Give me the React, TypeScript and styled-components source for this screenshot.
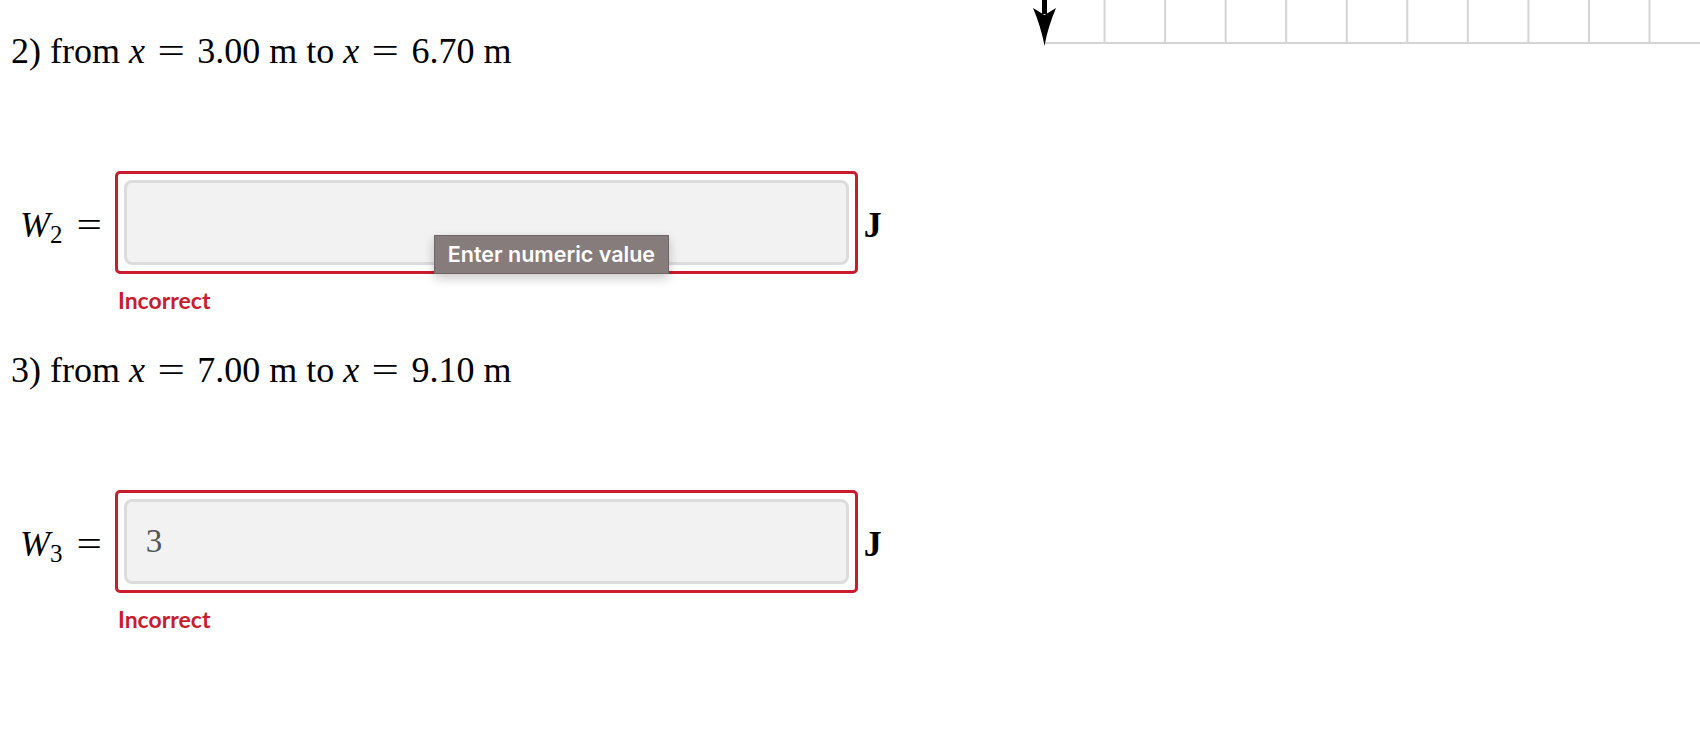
import React from 'react';
import styled, { createGlobalStyle } from 'styled-components';

const GlobalStyle = createGlobalStyle`
  html, body {
    margin: 0;
    padding: 0;
    background: #fff;
  }
  body {
    font-family: "Liberation Serif", "Times New Roman", serif;
    color: #000;
  }
`;

const Page = styled.div`
  display: flex;
  align-items: flex-start;
  width: 1700px;
  min-height: 736px;
`;

const Questions = styled.div`
  flex: 0 0 1030px;
  display: flex;
  flex-direction: column;
  padding-top: 29px;
`;

const Section = styled.section`
  display: flex;
  flex-direction: column;
  & + & {
    margin-top: 35px;
  }
`;

const Prompt = styled.div`
  font-size: 36px;
  line-height: 44px;
  padding-left: 11px;
  white-space: nowrap;
`;

const Var = styled.i`
  font-style: italic;
`;

const Eq = styled.span<{ $scale?: number; $gap?: number }>`
  display: inline-block;
  margin: 0 ${({ $gap }) => $gap ?? 16}px;
  transform: scaleX(${({ $scale }) => $scale ?? 1.35});
`;

const AnswerRow = styled.div`
  display: flex;
  align-items: center;
  margin-top: 98px;
`;

const Label = styled.div`
  flex: 0 0 114px;
  box-sizing: border-box;
  padding: 5px 0 0 20px;
  font-size: 36px;
  line-height: 44px;
  white-space: nowrap;
`;

const Sub = styled.sub`
  font-size: 25px;
  font-style: normal;
  vertical-align: -6px;
  line-height: 0;
`;

const Field = styled.div`
  position: relative;
  box-sizing: border-box;
  width: 743px;
  height: 103px;
  padding: 6px;
  border: 3px solid #c91c2e;
  border-radius: 5px;
`;

const Input = styled.input`
  display: block;
  box-sizing: border-box;
  width: 100%;
  height: 100%;
  margin: 0;
  padding: 0 19px;
  border: 3px solid #dcdcdc;
  border-radius: 8px;
  background: #f2f2f2;
  font-family: "Liberation Serif", "Times New Roman", serif;
  font-size: 33px;
  color: #555;
  outline: none;
`;

const Unit = styled.div`
  padding: 5px 0 0 6px;
  font-size: 36px;
  line-height: 44px;
  font-weight: 700;
`;

const Tooltip = styled.div`
  position: absolute;
  left: 316px;
  top: 61px;
  height: 39px;
  box-sizing: border-box;
  padding: 0 13px;
  background: #867c7c;
  border: 1px solid #6e6565;
  color: #fff;
  font-family: Inter, "Liberation Sans", Arial, sans-serif;
  font-weight: 600;
  font-size: 21.5px;
  line-height: 37px;
  white-space: nowrap;
  box-shadow: 0 4px 10px rgba(0, 0, 0, 0.22);
`;

const Feedback = styled.div`
  margin-top: 13px;
  padding-left: 118px;
  font-family: Lato, "Open Sans", sans-serif;
  font-weight: 700;
  font-size: 23px;
  line-height: 26px;
  color: #c91c2e;
`;

const Figure = styled.svg`
  display: block;
  flex: 0 0 670px;
`;

type Part = {
  number: number;
  from: string;
  to: string;
  index: number;
  value: string;
  hint?: string;
};

const parts: Part[] = [
  { number: 2, from: '3.00', to: '6.70', index: 2, value: '', hint: 'Enter numeric value' },
  { number: 3, from: '7.00', to: '9.10', index: 3, value: '3' },
];

const GridTop: React.FC = () => {
  const step = 60.55;
  const lines = Array.from({ length: 11 }, (_, i) => 14 + step * (i + 1));
  return (
    <Figure width="670" height="60" viewBox="0 0 670 60">
      {lines.map((x) => (
        <line key={x} x1={x} y1={0} x2={x} y2={43} stroke="#d4d4d4" strokeWidth="2" />
      ))}
      <line x1={15} y1={43} x2={670} y2={43} stroke="#d4d4d4" strokeWidth="2" />
      <rect x={12} y={0} width={5} height={14} fill="#000" />
      <path d="M3 8 L14.5 15 L26 8 C21 20 17 32 14.5 46 C12 32 8 20 3 8 Z" fill="#000" />
    </Figure>
  );
};

const Question: React.FC<{ part: Part }> = ({ part }) => (
  <Section>
    <Prompt>
      {part.number}) from <Var>x</Var>
      <Eq>=</Eq>
      {part.from} m to <Var>x</Var>
      <Eq>=</Eq>
      {part.to} m
    </Prompt>
    <AnswerRow>
      <Label>
        <Var>W</Var>
        <Sub>{part.index}</Sub>
        <Eq $gap={16} $scale={1.25}>=</Eq>
      </Label>
      <Field>
        <Input type="text" readOnly defaultValue={part.value} />
        {part.hint && <Tooltip>{part.hint}</Tooltip>}
      </Field>
      <Unit>J</Unit>
    </AnswerRow>
    <Feedback>Incorrect</Feedback>
  </Section>
);

const App: React.FC = () => (
  <>
    <GlobalStyle />
    <Page>
      <Questions>
        {parts.map((p) => (
          <Question key={p.number} part={p} />
        ))}
      </Questions>
      <GridTop />
    </Page>
  </>
);

export default App;
